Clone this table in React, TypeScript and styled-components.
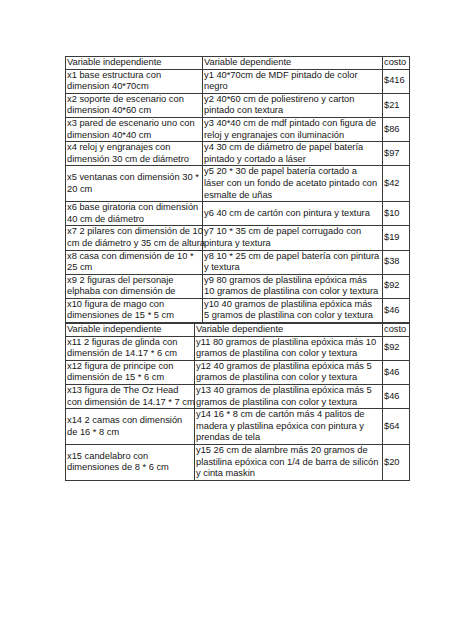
import React from "react";
import styled, { createGlobalStyle } from "styled-components";

const Global = createGlobalStyle`
  html, body { margin: 0; padding: 0; background: #ffffff; }
  body { font-family: "Liberation Sans", Arial, sans-serif; }
`;

const Page = styled.div`
  width: 474px;
  height: 632px;
  background: #ffffff;
  box-sizing: border-box;
  padding: 56px 0 0 65px;
  display: flex;
  flex-direction: column;
`;

const Table = styled.table`
  border-collapse: collapse;
  table-layout: fixed;
  width: 344px;
  font-family: "Liberation Sans", Arial, sans-serif;
  font-size: 9.3px;
  line-height: 11.6px;
  color: #161616;
`;

const Cell = styled.td`
  border: 1px solid #3a3a3a;
  padding: 0 0 0 1px;
  vertical-align: middle;
  white-space: nowrap;
  overflow: visible;
  text-align: left;
`;

type Row = [string[], string[], string];

const header: Row = [["Variable independiente"], ["Variable dependiente"], "costo"];

const rows1: Row[] = [
  header,
  [["x1 base estructura con", "dimension 40*70cm"], ["y1 40*70cm de MDF pintado de color", "negro"], "$416"],
  [["x2 soporte de escenario con", "dimension 40*60 cm"], ["y2 40*60 cm de poliestireno y carton", "pintado con textura"], "$21"],
  [["x3 pared de escenario uno con", "dimension 40*40 cm"], ["y3 40*40 cm de mdf pintado con figura de", "reloj y engranajes con iluminación"], "$86"],
  [["x4 reloj y engranajes con", "dimensión 30 cm de diámetro"], ["y4 30 cm de diámetro de papel batería", "pintado y cortado a láser"], "$97"],
  [["x5 ventanas con dimensión 30 *", "20 cm"], ["y5 20 * 30 de papel batería cortado a", "láser con un fondo de acetato pintado con", "esmalte de uñas"], "$42"],
  [["x6 base giratoria con dimensión", "40 cm de diámetro"], ["y6 40 cm de cartón con pintura y textura"], "$10"],
  [["x7 2 pilares con dimensión de 10", "cm de diámetro y 35 cm de altura"], ["y7 10 * 35 cm de papel corrugado con", "pintura y textura"], "$19"],
  [["x8 casa con dimensión de 10 *", "25 cm"], ["y8 10 * 25 cm de papel batería con pintura", "y textura"], "$38"],
  [["x9 2 figuras del personaje", "elphaba con dimensión de"], ["y9 80 gramos de plastilina epóxica más", "10 gramos de plastilina con color y textura"], "$92"],
  [["x10 figura de mago con", "dimensiones de 15 * 5 cm"], ["y10 40 gramos de plastilina epóxica más", "5 gramos de plastilina con color y textura"], "$46"],
];

const rows2: Row[] = [
  header,
  [["x11 2 figuras de glinda con", "dimensión de 14.17 * 6 cm"], ["y11 80 gramos de plastilina epóxica más 10", "gramos de plastilina con color y textura"], "$92"],
  [["x12 figura de principe con", "dimensión de 15 * 6 cm"], ["y12 40 gramos de plastilina epóxica más 5", "gramos de plastilina con color y textura"], "$46"],
  [["x13 figura de The Oz Head", "con dimensión de 14.17 * 7 cm"], ["y13 40 gramos de plastilina epóxica más 5", "gramos de plastilina con color y textura"], "$46"],
  [["x14 2 camas con dimensión", "de 16 * 8 cm"], ["y14 16 * 8 cm de cartón más 4 palitos de", "madera y plastilina epóxica con pintura y", "prendas de tela"], "$64"],
  [["x15 candelabro con", "dimensiones de 8 * 6 cm"], ["y15 26 cm de alambre más 20 gramos de", "plastilina epóxica con 1/4 de barra de silicón", "y cinta maskin"], "$20"],
];

const Lines: React.FC<{ lines: string[] }> = ({ lines }) => (
  <>
    {lines.map((l, i) => (
      <React.Fragment key={i}>
        {i > 0 && <br />}
        {l}
      </React.Fragment>
    ))}
  </>
);

const CostTable: React.FC<{ rows: Row[]; cols: number[] }> = ({ rows, cols }) => (
  <Table>
    <colgroup>
      {cols.map((w, i) => (
        <col key={i} style={{ width: w }} />
      ))}
    </colgroup>
    <tbody>
      {rows.map((r, i) => (
        <tr key={i}>
          <Cell>
            <Lines lines={r[0]} />
          </Cell>
          <Cell>
            <Lines lines={r[1]} />
          </Cell>
          <Cell>{r[2]}</Cell>
        </tr>
      ))}
    </tbody>
  </Table>
);

export default function App() {
  return (
    <>
      <Global />
      <Page>
        <CostTable rows={rows1} cols={[137, 180, 27]} />
        <CostTable rows={rows2} cols={[129, 188, 27]} />
      </Page>
    </>
  );
}
